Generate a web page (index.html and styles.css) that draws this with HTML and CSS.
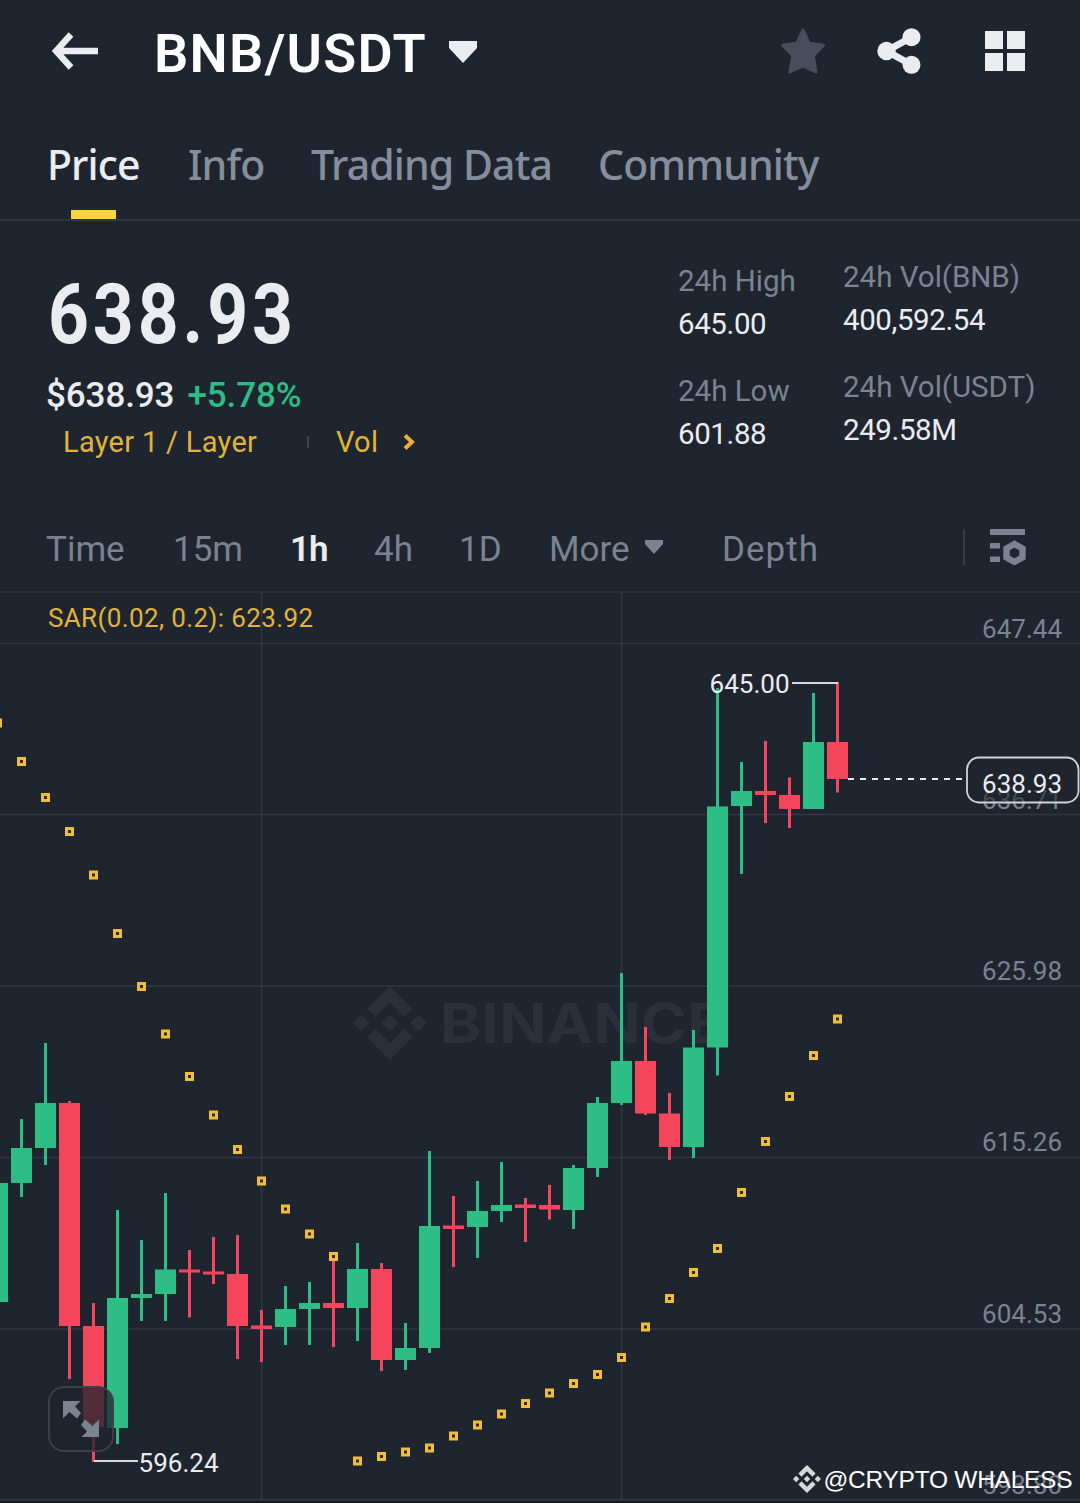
FILE: index.html
```html
<!DOCTYPE html>
<html lang="en">
<head>
    <meta charset="UTF-8">
    <meta name="viewport" content="width=device-width, initial-scale=1.0">
    <title>BNB/USDT</title>
    <link rel="stylesheet" href="styles.css">
</head>
<body>
    <header class="topbar">
        <svg class="back" width="46" height="38" viewBox="0 0 46 38">
            <path d="M19 2.5 L4 19 L19 35.5 M4 19 H46" fill="none" stroke="#eaecef" stroke-width="6.4"/>
        </svg>
        <h1>BNB/USDT</h1>
        <svg class="pair-caret" width="28" height="22" viewBox="0 0 28 22">
            <path d="M0 0 H28 V7 L14 22 L0 7 Z" fill="#eaecef"/>
        </svg>
        <div class="actions">
            <svg width="46" height="48" viewBox="0 0 46 48">
                <path d="M23 3 L29.3 16.3 L43.5 18.3 L33.2 28.6 L36 45 L23 39 L10 45 L12.8 28.6 L2.5 18.3 L16.7 16.3 Z" fill="#474d5c" stroke="#474d5c" stroke-width="3" stroke-linejoin="round"/>
            </svg>
            <svg width="44" height="46" viewBox="0 0 44 46">
                <path d="M35 9 L9.5 23 L35 37" fill="none" stroke="#eaecef" stroke-width="7"/>
                <circle cx="9.5" cy="23" r="9.2" fill="#eaecef"/>
                <circle cx="34.5" cy="9.2" r="9" fill="#eaecef"/>
                <circle cx="34.5" cy="36.8" r="9" fill="#eaecef"/>
            </svg>
            <svg width="40" height="40" viewBox="0 0 40 40">
                <path d="M0 0 H18 V18 H0 Z M22 0 H40 V18 H22 Z M0 22 H18 V40 H0 Z M22 22 H40 V40 H22 Z" fill="#eaecef"/>
            </svg>
        </div>
    </header>

    <nav class="tabs">
        <a class="tab active">Price</a>
        <a class="tab">Info</a>
        <a class="tab">Trading Data</a>
        <a class="tab">Community</a>
    </nav>

    <section class="quote">
        <div class="quote-main">
            <div class="last-price">638.93</div>
            <div class="change-row">
                <span>$638.93</span>
                <span class="up">+5.78%</span>
            </div>
            <div class="tag-row">
                <span class="category">Layer 1 / Layer</span>
                <span class="tag-sep"></span>
                <span>Vol</span>
                <svg width="12" height="16" viewBox="0 0 12 16">
                    <path d="M2 1.5 L9 8 L2 14.5" fill="none" stroke="#f0b02c" stroke-width="4"/>
                </svg>
            </div>
        </div>
        <dl class="stats">
            <div><dt>24h High</dt><dd>645.00</dd></div>
            <div><dt>24h Low</dt><dd>601.88</dd></div>
        </dl>
        <dl class="stats volume">
            <div><dt>24h Vol(BNB)</dt><dd>400,592.54</dd></div>
            <div><dt>24h Vol(USDT)</dt><dd>249.58M</dd></div>
        </dl>
    </section>

    <div class="intervals">
        <span>Time</span>
        <span>15m</span>
        <span class="active">1h</span>
        <span>4h</span>
        <span>1D</span>
        <span class="more">More
            <svg width="18" height="14" viewBox="0 0 18 14">
                <path d="M0 0 H18 V4 L9 14 L0 4 Z" fill="#7b8291"/>
            </svg>
        </span>
        <span class="depth">Depth</span>
        <i class="divider"></i>
        <svg class="settings" width="36" height="36" viewBox="0 0 36 36">
            <path d="M0 0 H35 V6 H0 Z M0 14 H10 V19.5 H0 Z M0 27.5 H10 V33 H0 Z" fill="#7b8291"/>
            <path d="M24.5 15 L32.5 19.5 V28.5 L24.5 33 L16.5 28.5 V19.5 Z" fill="none" stroke="#7b8291" stroke-width="6.4"/>
        </svg>
    </div>

    <!-- user units are page pixels, the plot starts under the interval row -->
    <svg class="chart" width="1080" height="910" viewBox="0 593 1080 910">
        <rect class="footer-strip" x="0" y="1501" width="1080" height="2"/>
        <path class="grid" d="M0 643.5 H1080 M0 814.5 H1080 M0 986 H1080 M0 1157.5 H1080 M0 1329 H1080 M0 1500 H1080 M261.5 593 V1500 M621.5 593 V1500"/>

        <g class="brand">
            <path transform="translate(353 986) scale(.584)" d="M38.73 53.2l24.59-24.58 24.6 24.6 14.3-14.31L63.32 0l-38.9 38.9zM0 63.31l14.3-14.31 14.31 14.31-14.31 14.3zM38.73 73.41l24.59 24.59 24.6-24.6 14.31 14.29-38.9 38.91-38.91-38.88zM98 63.31l14.3-14.31 14.31 14.3-14.31 14.32zM77.83 63.3L63.32 48.78 48.81 63.28l14.51 14.5z"/>
            <text x="440" y="1042.5" textLength="285" lengthAdjust="spacingAndGlyphs">BINANCE</text>
        </g>

        <g class="axis">
            <text x="982" y="638" textLength="80">647.44</text>
            <text x="982" y="809" textLength="80">636.71</text>
            <text x="982" y="980" textLength="80">625.98</text>
            <text x="982" y="1151" textLength="80">615.26</text>
            <text x="982" y="1323" textLength="80">604.53</text>
            <text x="982" y="1494" textLength="80">593.80</text>
        </g>

        <g id="candles"></g>
        <g id="sar"></g>

        <text class="sar-label" x="48" y="627" textLength="265">SAR(0.02, 0.2): 623.92</text>

        <path class="callout" d="M792 683 H838 M94 1461 H138"/>
        <text class="extreme" x="709.5" y="693" textLength="80">645.00</text>
        <text class="extreme" x="138.5" y="1472" textLength="80">596.24</text>

        <path class="price-line" d="M848 779 H965"/>
        <rect class="price-pill" x="967" y="757.5" width="111.5" height="45" rx="12"/>
        <text class="extreme" x="982" y="793" textLength="80">638.93</text>

        <g class="expand">
            <rect x="49" y="1387" width="64" height="64" rx="15"/>
            <path d="M63 1401 H80.5 L75 1406.5 L81 1413 L77 1418.5 L69.5 1412 L63 1418.5 Z"/>
            <path d="M99 1437 H81.5 L87 1431.5 L81 1425 L85 1419.5 L92.5 1426 L99 1419.5 Z"/>
        </g>

        <g class="author">
            <path transform="translate(793 1465) scale(.221)" d="M38.73 53.2l24.59-24.58 24.6 24.6 14.3-14.31L63.32 0l-38.9 38.9zM0 63.31l14.3-14.31 14.31 14.31-14.31 14.3zM38.73 73.41l24.59 24.59 24.6-24.6 14.31 14.29-38.9 38.91-38.91-38.88zM98 63.31l14.3-14.31 14.31 14.3-14.31 14.32zM77.83 63.3L63.32 48.78 48.81 63.28l14.51 14.5z"/>
            <text x="823.5" y="1488" textLength="249">@CRYPTO WHALESS</text>
        </g>
    </svg>

    <script src="script.js"></script>
</body>
</html>
```
FILE: styles.css
```css
body {
    margin: 0;
    width: 1080px;
    height: 1503px;
    overflow: hidden;
    background: #1f252f;
    color: #eaecef;
    font-family: Roboto, sans-serif;
    white-space: nowrap;
}
svg {
    display: block;
    flex: none;
}

.topbar {
    display: flex;
    align-items: center;
    height: 102px;
    padding: 0 55px 0 52px;
}
.topbar h1 {
    margin: 5px 0 0 56px;
    font-size: 54px;
    font-weight: 600;
    line-height: 64px;
    letter-spacing: 1.3px;
    color: #fff;
}
.pair-caret {
    margin: 2px 0 0 22px;
}
.actions {
    display: flex;
    align-items: center;
    margin-left: auto;
}
.actions svg + svg {
    margin-left: 51px;
}
.actions svg:last-child {
    margin-left: 64px;
}

.tabs {
    display: grid;
    grid-template-columns: 141px 123px 287px auto;
    height: 117px;
    padding-left: 47px;
    border-bottom: 2px solid #2f3641;
    font-family: "Noto Sans", sans-serif;
    font-size: 41px;
    font-weight: 500;
    line-height: 125px;
    letter-spacing: -0.9px;
    color: #848e9c;
}
.tab.active {
    position: relative;
    height: 117px;
    color: #eaecef;
}
.tab.active::after {
    content: "";
    position: absolute;
    left: 24px;
    bottom: 0;
    width: 45px;
    height: 9px;
    background: #f8d33a;
}

.quote {
    display: grid;
    grid-template-columns: 632px 165px auto;
    box-sizing: border-box;
    height: 286px;
    padding: 39px 0 0 46px;
}
.quote-main {
    padding-top: 10px;
}
.last-price {
    margin-left: 2px;
    font-size: 84px;
    font-weight: 700;
    line-height: 90px;
    letter-spacing: 4.6px;
    transform: scaleX(0.85);
    transform-origin: left;
}
.change-row {
    display: flex;
    gap: 13px;
    margin-top: 11px;
    font-size: 35px;
    font-weight: 500;
    line-height: 50px;
    letter-spacing: -0.1px;
}
.up {
    color: #2ebd85;
}
.tag-row {
    display: flex;
    align-items: center;
    margin: 1px 0 0 17px;
    font-size: 29px;
    line-height: 40px;
    letter-spacing: 0.3px;
    color: #e0b33c;
}
.category {
    width: 244px;
}
.tag-sep {
    width: 2px;
    height: 12px;
    margin-right: 27px;
    background: #3c434f;
}
.tag-row svg {
    margin-left: 25px;
}
.stats {
    margin: 0;
    font-size: 29.5px;
    line-height: 43px;
}
.stats div {
    margin-bottom: 24px;
}
.stats dt {
    color: #7b8291;
}
.stats dd {
    margin: 0;
    letter-spacing: -0.4px;
}
.stats.volume {
    margin-top: -4px;
}

.intervals {
    display: grid;
    grid-template-columns: 127px 117px 84px 85px 90px 173px 241px 27px auto;
    align-items: center;
    height: 84px;
    padding-left: 46px;
    border-bottom: 2px solid #2b313c;
    font-size: 35px;
    color: #7b8291;
}
.intervals .active {
    font-weight: 600;
    letter-spacing: -1px;
    color: #eaecef;
}
.intervals .more {
    display: flex;
    align-items: center;
    gap: 15px;
}
.intervals .more svg {
    margin-bottom: 5px;
}
.intervals .depth {
    letter-spacing: 1px;
}
.divider,
.settings {
    margin-bottom: 4px;
}
.divider {
    width: 2px;
    height: 36px;
    background: #363d49;
}

.chart text {
    font-size: 26px;
}
.footer-strip {
    fill: #161922;
}
.grid {
    stroke: #303742;
    stroke-width: 1.6;
}
.brand {
    fill: #2b303b;
}
.brand text {
    font: 700 55px Inter, sans-serif;
}
.axis {
    fill: #7b8291;
}
.chart .sar-label {
    fill: #e0b33c;
}
.chart .extreme {
    fill: #eaecef;
}
.callout {
    stroke: #d5d8dd;
    stroke-width: 2;
}
.price-line {
    stroke: #eaecef;
    stroke-width: 2;
    stroke-dasharray: 6 6;
}
.price-pill {
    fill: #1f252f;
    fill-opacity: 0.6;
    stroke: #cfd3da;
    stroke-width: 1.8;
}
.expand rect {
    fill: #1f252f;
    fill-opacity: 0.76;
    stroke: #3a404c;
    stroke-width: 2;
}
.expand path {
    fill: #7b8291;
}
.author path {
    fill: #d6d7d9;
}
.author text {
    font: 24.5px "Liberation Sans", Arial, sans-serif;
    fill: #fff;
}
```
FILE: script.js
```js
const GREEN = '#2ebd85';
const RED = '#f6465d';
const STEP = 24;
const FIRST_X = -2.5;

// [colour, wick top, body top, body bottom, wick bottom]
const candles = [
    [GREEN, 1183, 1183, 1302, 1302],
    [GREEN, 1119, 1148, 1183, 1197],
    [GREEN, 1043, 1103, 1148, 1165],
    [RED, 1101, 1103, 1326, 1379],
    [RED, 1303, 1326, 1427, 1462],
    [GREEN, 1210, 1298, 1428, 1444],
    [GREEN, 1240, 1294, 1298, 1321],
    [GREEN, 1193, 1269.5, 1294, 1321],
    [RED, 1250, 1269.5, 1272.5, 1317.5],
    [RED, 1237, 1271.5, 1274.5, 1284],
    [RED, 1235, 1274, 1326, 1359],
    [RED, 1310, 1325.5, 1329, 1362],
    [GREEN, 1286, 1309, 1327, 1345],
    [GREEN, 1282, 1303, 1309, 1345],
    [RED, 1256, 1303, 1308, 1347],
    [GREEN, 1243, 1269, 1308, 1341],
    [RED, 1263, 1269, 1360, 1371],
    [GREEN, 1323, 1348, 1360, 1370],
    [GREEN, 1151, 1226, 1348, 1353],
    [RED, 1196, 1225.5, 1229, 1267],
    [GREEN, 1181, 1211, 1227, 1258],
    [GREEN, 1162, 1205, 1211, 1222],
    [RED, 1198, 1204.5, 1208, 1242],
    [RED, 1185, 1205, 1209.5, 1219.5],
    [GREEN, 1165, 1168, 1210, 1229],
    [GREEN, 1097, 1103, 1168, 1177],
    [GREEN, 973, 1061, 1103, 1105],
    [RED, 1027, 1061, 1113.5, 1115],
    [RED, 1093, 1113.5, 1147, 1160],
    [GREEN, 1030, 1047.5, 1147, 1158],
    [GREEN, 688, 806.5, 1047.5, 1075.5],
    [GREEN, 762, 791, 806, 874],
    [RED, 741, 791, 795, 823],
    [RED, 777.5, 795, 809, 828],
    [GREEN, 693, 742, 809, 809],
    [RED, 682, 742, 779, 792.5]
];

const sar = [
    723, 761.5, 797.5, 831.5, 875, 933.5, 986.5, 1034, 1076.5, 1115, 1149.5, 1181,
    1209, 1234, 1256.5, 1461, 1456.5, 1452, 1448, 1436, 1425, 1414, 1403.5, 1393,
    1383.5, 1374.5, 1357.5, 1327, 1298.5, 1272.5, 1248.5, 1192.5, 1141.5, 1096.5, 1055.5, 1019
];

function rect(x, y, width, height, fill) {
    return `<rect x="${x}" y="${y}" width="${width}" height="${height}" fill="${fill}"/>`;
}

document.getElementById('candles').innerHTML = candles.map(([color, high, top, bottom, low], i) => {
    const x = FIRST_X + i * STEP;
    return rect(x - 1.5, high, 3, low - high, color) + rect(x - 10.5, top, 21, bottom - top, color);
}).join('');

document.getElementById('sar').innerHTML = sar.map((y, i) => {
    const x = FIRST_X + i * STEP;
    return rect(x - 4.5, y - 4.5, 9, 9, '#efbe3c') + rect(x - 1.5, y - 1.5, 3, 3, '#33260f');
}).join('');
```
